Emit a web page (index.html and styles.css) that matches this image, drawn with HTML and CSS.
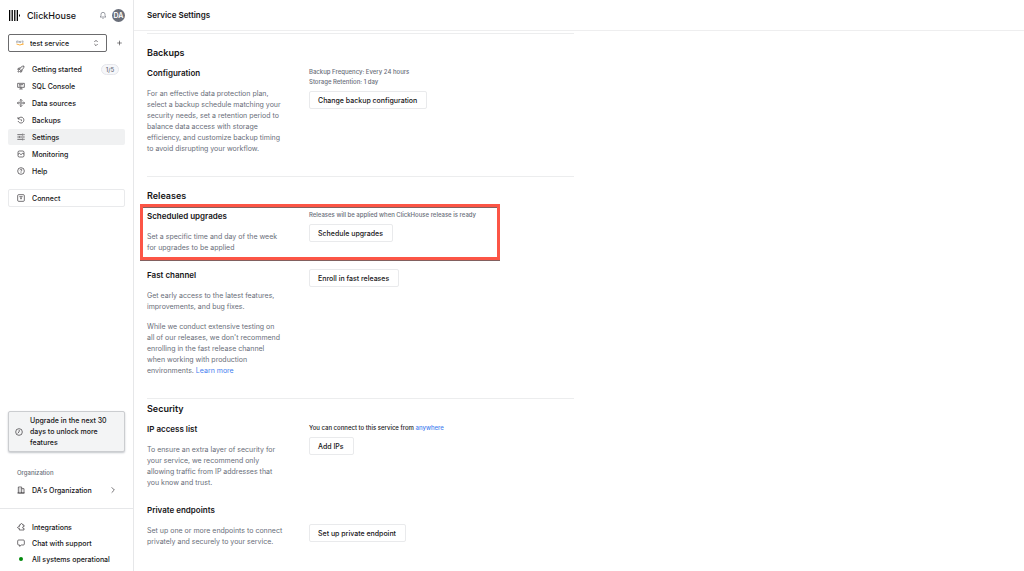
FILE: index.html
```html
<!DOCTYPE html>
<html lang="en">
<head>
    <meta charset="UTF-8">
    <meta name="viewport" content="width=device-width, initial-scale=1.0">
    <title>Service Settings</title>
    <link rel="stylesheet" href="styles.css">
</head>
<body>
    <aside class="sidebar">
        <div class="brand">
            <svg class="logo" viewBox="0 0 12 12"><path d="M0 0h1.4v12H0zM2.8 0h1.4v12H2.8zM5.6 0H7v12H5.6zM8.4 0h1.4v12H8.4zM11 4.8h1v2.4h-1z"/></svg>
            <span class="brand-name">ClickHouse</span>
            <button class="bell" aria-label="Notifications"><svg class="icon" viewBox="0 0 24 24"><path d="M3 18c3-2 3-4 3-8a6 6 0 0 1 12 0c0 4 0 6 3 8zM10 22h4"/></svg></button>
            <button class="avatar">DA</button>
        </div>

        <div class="service">
            <div class="service-select">
                <select aria-label="Service">
                    <option>test service</option>
                </select>
                <svg class="aws" viewBox="0 0 16 12"><path class="aws-text" d="M1 5.500V3q0-1.500 1.500-1.500T4 3v2.500M1.200 4H4M5.500 1.500l1 4 1.200-3.500L9 5.500l1-4M14.500 2q-2.500-1-2.500.5t2.500 1.200-2.800 1.400"/><path class="aws-smile" d="M1 8q7 4 13 0M12.500 7.500h2l-.6 2"/></svg>
                <svg class="icon updown" viewBox="0 0 24 24"><path d="M7 9l5-5 5 5M7 15l5 5 5-5"/></svg>
            </div>
            <button class="add" aria-label="Add service"><svg class="icon" viewBox="0 0 24 24"><path d="M12 4v16M4 12h16"/></svg></button>
        </div>

        <nav class="menu">
            <a href="#"><svg class="icon" viewBox="0 0 24 24"><path d="M8 13C10 7 14 3 21 3c0 7-4 11-10 13zM9 9H5l-3 4 6 0M15 15v4l-4 3v-6M6 16c-2 0-3 2-3 5 3 0 5-1 5-3M15 8v1"/></svg>Getting started<span class="badge">1/5</span></a>
            <a href="#"><svg class="icon" viewBox="0 0 24 24"><path d="M2 4h20v12H2zM6 8h12M6 12h7M12 16v5M7 21h10"/></svg>SQL Console</a>
            <a href="#"><svg class="icon" viewBox="0 0 24 24"><path d="M12 8l4 4-4 4-4-4zM8 5l4-4 4 4M8 19l4 4 4-4M5 8l-4 4 4 4M19 8l4 4-4 4M12 2v6M12 16v6M2 12h6M16 12h6"/></svg>Data sources</a>
            <a href="#"><svg class="icon" viewBox="0 0 24 24"><path d="M3 3v6h6M4 8c4-6 12-6 15-1 4 6 0 14-7 14-4 0-7-2-9-6M12 9v4l3 2"/></svg>Backups</a>
            <a href="#" class="active"><svg class="icon" viewBox="0 0 24 24"><path d="M1 5h14M19 5h4M1 12h5M10 12h13M1 19h14M19 19h4M17 2v6M8 9v6M17 16v6"/></svg>Settings</a>
            <a href="#"><svg class="icon" viewBox="0 0 24 24"><rect x="3" y="3" width="18" height="18" rx="4"/><path d="M3 13l4-3 5 4 5-4 4 2"/></svg>Monitoring</a>
            <a href="#"><svg class="icon" viewBox="0 0 24 24"><circle cx="12" cy="12" r="10"/><path d="M9 10c0-4 6-4 6-1 0 2-3 2-3 5M12 16v2"/></svg>Help</a>
        </nav>

        <button class="connect"><svg class="icon" viewBox="0 0 24 24"><rect x="2" y="2" width="20" height="20" rx="3"/><path d="M7 8h10M9 12h6M12 12v4"/></svg>Connect</button>

        <button class="upgrade">
            <svg class="icon" viewBox="0 0 24 24"><circle cx="12" cy="12" r="10"/><path d="M13 6l-1 6-4 4"/></svg>
            <span>Upgrade in the next 30 days to unlock more features</span>
        </button>

        <div class="org-label">Organization</div>
        <nav class="menu org">
            <a href="#"><svg class="icon" viewBox="0 0 24 24"><path d="M4 3h10v18H4zM14 8h7v13h-7M8 8h2M8 12h2M8 16h2M1 21h22"/></svg>DA's Organization<svg class="icon chevron" viewBox="0 0 24 24"><path d="M8 4l8 8-8 8"/></svg></a>
        </nav>

        <nav class="menu footer">
            <a href="#"><svg class="icon" viewBox="0 0 24 24"><path d="M7 6h3c0-6 7-6 7 0h4v5c-6-1-6 6 0 5v5H7v-5c-7 1-7-6 0-5z"/></svg>Integrations</a>
            <a href="#"><svg class="icon" viewBox="0 0 24 24"><path d="M5 3h14q3 0 3 3v9q0 3-3 3h-6l-5 4v-4H5q-3 0-3-3V6q0-3 3-3z"/></svg>Chat with support</a>
            <a href="#"><span class="status"></span>All systems operational</a>
        </nav>
    </aside>

    <div class="page">
        <header class="topbar"><h1>Service Settings</h1></header>

        <main class="content">
            <section>
                <h2>Backups</h2>
                <div class="row">
                    <div class="info">
                        <h3>Configuration</h3>
                        <p>For an effective data protection plan, select a backup schedule matching your security needs, set a retention period to balance data access with storage efficiency, and customize backup timing to avoid disrupting your workflow.</p>
                    </div>
                    <div class="action">
                        <div class="note">Backup Frequency: Every 24 hours<br>Storage Retention: 1 day</div>
                        <button class="btn">Change backup configuration</button>
                    </div>
                </div>
            </section>

            <section>
                <h2>Releases</h2>
                <div class="row highlighted">
                    <div class="info">
                        <h3>Scheduled upgrades</h3>
                        <p>Set a specific time and day of the week for upgrades to be applied</p>
                    </div>
                    <div class="action">
                        <div class="note">Releases will be applied when ClickHouse release is ready</div>
                        <button class="btn">Schedule upgrades</button>
                    </div>
                </div>
                <div class="row">
                    <div class="info">
                        <h3>Fast channel</h3>
                        <p>Get early access to the latest features, improvements, and bug fixes.</p>
                        <p>While we conduct extensive testing on all of our releases, we don't recommend enrolling in the fast release channel when working with production environments. <a href="#">Learn more</a></p>
                    </div>
                    <div class="action">
                        <button class="btn">Enroll in fast releases</button>
                    </div>
                </div>
            </section>

            <section class="security">
                <h2>Security</h2>
                <div class="row">
                    <div class="info">
                        <h3>IP access list</h3>
                        <p>To ensure an extra layer of security for your service, we recommend only allowing traffic from IP addresses that you know and trust.</p>
                    </div>
                    <div class="action">
                        <div class="note dark">You can connect to this service from <a href="#">anywhere</a></div>
                        <button class="btn">Add IPs</button>
                    </div>
                </div>
                <div class="row">
                    <div class="info">
                        <h3>Private endpoints</h3>
                        <p>Set up one or more endpoints to connect privately and securely to your service.</p>
                    </div>
                    <div class="action lower">
                        <button class="btn">Set up private endpoint</button>
                    </div>
                </div>
            </section>
        </main>
    </div>
</body>
</html>
```

FILE: styles.css
```css
* {
    box-sizing: border-box;
}
body {
    margin: 0;
    display: flex;
    min-height: 100vh;
    font-family: Inter, "Liberation Sans", sans-serif;
    font-size: 7px;
    line-height: 11px;
    color: #161517;
    background: #fff;
}
h1, h2, h3, p {
    margin: 0;
}
a {
    color: #437eef;
    text-decoration: none;
}
button, select {
    font: inherit;
    color: inherit;
    padding: 0;
    border: 0;
    background: none;
}
.icon {
    width: 8px;
    height: 8px;
    flex: none;
    display: block;
    fill: none;
    stroke: #302e32;
    stroke-width: 2;
}

/* sidebar */
.sidebar {
    width: 134px;
    flex: none;
    display: flex;
    flex-direction: column;
    border-right: 1px solid #e6e7e9;
    font-weight: 500;
}
.brand {
    height: 30px;
    padding: 0 8px 0 9px;
    display: flex;
    align-items: center;
}
.logo {
    width: 11px;
    height: 11px;
    margin-right: 7px;
}
.brand-name {
    font-size: 9px;
}
.bell {
    margin-left: auto;
    margin-right: 5px;
}
.bell .icon {
    stroke: #696e79;
}
.avatar {
    width: 13px;
    height: 13px;
    border-radius: 50%;
    background: #696e79;
    color: #fff;
    font-weight: 600;
    line-height: 13px;
}
.service {
    display: flex;
    align-items: center;
    margin: 4px 8px 0;
}
.service-select {
    flex: 1;
    display: grid;
    align-items: center;
}
.service-select > * {
    grid-area: 1 / 1;
}
.service-select select {
    appearance: none;
    width: 100%;
    height: 18px;
    padding-left: 21px;
    border: 1px solid #6b6b6d;
    border-radius: 2px;
    background: #fff;
}
.aws {
    width: 8px;
    height: 6px;
    margin-left: 8px;
    fill: none;
    stroke-width: 1;
    pointer-events: none;
}
.aws-text {
    stroke: #7d8590;
}
.aws-smile {
    stroke: #fbb040;
    stroke-width: 2;
}
.updown {
    justify-self: end;
    margin-right: 7px;
    pointer-events: none;
}
.add {
    margin-left: 9px;
    margin-right: 2px;
}
.add .icon {
    width: 7px;
}
.menu {
    display: flex;
    flex-direction: column;
    gap: 1px;
    margin: 9px 8px 0;
}
.menu a {
    height: 16px;
    display: flex;
    align-items: center;
    gap: 7px;
    padding: 0 9px;
    border-radius: 2px;
    color: inherit;
}
.menu .active {
    background: #f0f1f2;
}
.badge {
    margin-left: auto;
    margin-right: -3px;
    width: 18px;
    border: 1px solid #e6e7ec;
    border-radius: 6px;
    background: #f6f7fa;
    color: #696e79;
    font-size: 6px;
    line-height: 9px;
    text-align: center;
}
.connect {
    display: flex;
    align-items: center;
    gap: 7px;
    height: 18px;
    margin: 10px 8px 0;
    padding: 0 8px;
    border: 1px solid #e9eaec;
    border-radius: 2px;
}
.upgrade {
    display: flex;
    align-items: center;
    gap: 7px;
    margin: auto 8px 0;
    padding: 3px 6px;
    border: 1px solid #cbcdd0;
    border-radius: 2px;
    background: #f3f4f5;
    box-shadow: 0 1px 2px #c3c6cb;
    text-align: left;
}
.org-label {
    margin: 15px 17px 0;
    color: #696e79;
    font-size: 6px;
}
.org {
    margin-top: 4px;
}
.chevron {
    margin-left: auto;
    margin-right: -1px;
}
.footer {
    gap: 0;
    margin: 10px 0 4px;
    padding: 10px 8px 0;
    border-top: 1px solid #e6e7e9;
}
.status {
    width: 4px;
    height: 4px;
    margin: 0 2px;
    border-radius: 50%;
    background: #008a0b;
}

/* main area */
.page {
    flex: 1;
}
.topbar {
    height: 31px;
    padding: 0 13px;
    display: flex;
    align-items: center;
    border-bottom: 1px solid #eeeeef;
}
.topbar h1 {
    font-size: 8px;
    font-weight: 600;
}
.content {
    max-width: 453px;
    padding: 2px 13px 0;
}
section {
    padding: 13px 0 22px;
    border-top: 1px solid #ecedee;
}
.security {
    padding-top: 4px;
}
h2 {
    margin-bottom: 8px;
    font-size: 9px;
    font-weight: 600;
    line-height: 12px;
}
h3 {
    font-size: 8px;
    font-weight: 600;
    white-space: nowrap;
}
.row {
    position: relative;
    display: grid;
    grid-template-columns: 136px 1fr;
    column-gap: 26px;
}
.row + .row {
    margin-top: 16px;
}
.info {
    padding-top: 1px;
}
.info p {
    margin-top: 9px;
    color: #696e79;
}
.note {
    margin-bottom: 4px;
    color: #696e79;
    font-size: 6px;
    font-weight: 500;
    line-height: 10px;
}
.dark {
    color: #161517;
}
.lower {
    padding-top: 20px;
}
.btn {
    height: 18px;
    padding: 0 9px 0 8px;
    border: 1px solid #e9eaec;
    border-radius: 2px;
    font-weight: 500;
}
/* callout frame around the upgrade schedule */
.highlighted::after {
    content: "";
    position: absolute;
    inset: -6px 74px -7px -7px;
    border: 3px solid #fc5546;
    box-shadow: 0 1px 0 #82605f, inset 0 1px 0 #82605f;
    pointer-events: none;
}
```
